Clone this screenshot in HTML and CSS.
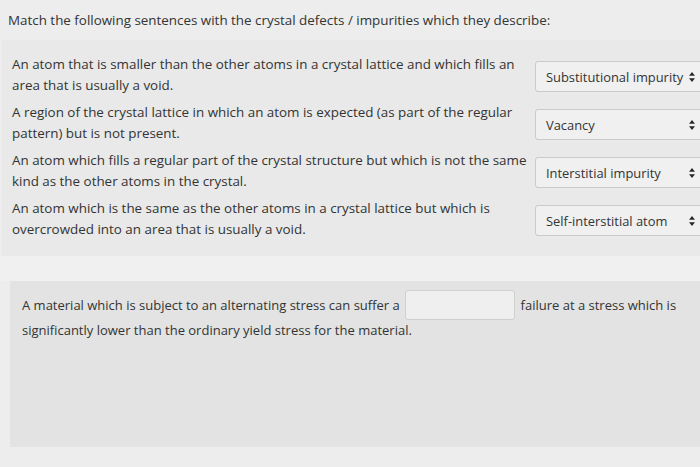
FILE: index.html
```html
<!DOCTYPE html>
<html>
<head>
<meta charset="utf-8">
<link rel="stylesheet" href="styles.css">
</head>
<body>
<div class="page">
  <p class="title">Match the following sentences with the crystal defects / impurities which they describe:</p>
  <div class="matching">
    <div class="row">
      <div class="stem">An atom that is smaller than the other atoms in a crystal lattice and which fills an area that is usually a void.</div>
      <div class="select"><span>Substitutional impurity</span><svg class="arrows" width="6" height="10" viewBox="0 0 6 10"><path d="M3 0L6 3.8H0Z M3 10L6 6.2H0Z" fill="#2a2a2a"/></svg></div>
    </div>
    <div class="row">
      <div class="stem">A region of the crystal lattice in which an atom is expected (as part of the regular pattern) but is not present.</div>
      <div class="select"><span>Vacancy</span><svg class="arrows" width="6" height="10" viewBox="0 0 6 10"><path d="M3 0L6 3.8H0Z M3 10L6 6.2H0Z" fill="#2a2a2a"/></svg></div>
    </div>
    <div class="row">
      <div class="stem">An atom which fills a regular part of the crystal structure but which is not the same kind as the other atoms in the crystal.</div>
      <div class="select"><span>Interstitial impurity</span><svg class="arrows" width="6" height="10" viewBox="0 0 6 10"><path d="M3 0L6 3.8H0Z M3 10L6 6.2H0Z" fill="#2a2a2a"/></svg></div>
    </div>
    <div class="row">
      <div class="stem">An atom which is the same as the other atoms in a crystal lattice but which is overcrowded into an area that is usually a void.</div>
      <div class="select"><span>Self-interstitial atom</span><svg class="arrows" width="6" height="10" viewBox="0 0 6 10"><path d="M3 0L6 3.8H0Z M3 10L6 6.2H0Z" fill="#2a2a2a"/></svg></div>
    </div>
  </div>
  <div class="gap"></div>
  <div class="cloze">
    <p class="cloze-text">A material which is subject to an alternating stress can suffer a <span class="blank"></span> failure at a stress which is significantly lower than the ordinary yield stress for the material.</p>
  </div>
</div>
</body>
</html>
```

FILE: styles.css
```css
html, body {
  margin: 0;
  padding: 0;
  background: #ecedec;
}
body {
  font-family: "Open Sans", "Noto Sans", sans-serif;
  color: #333434;
  font-size: 13px;
  width: 700px;
  height: 467px;
  overflow: hidden;
}
.page {
  display: flex;
  flex-direction: column;
}
.title {
  margin: 0;
  padding: 10px 8px 0 8px;
  height: 40px;
  box-sizing: border-box;
  line-height: 20px;
  font-size: 13.4px;
}
.matching {
  margin-left: 2px;
  background: #e8e9e8;
  padding: 12px 0 10px 0;
  height: 216px;
  box-sizing: border-box;
  display: flex;
  flex-direction: column;
  gap: 3px;
}
.row {
  display: flex;
  align-items: center;
  height: 45px;
}
.stem {
  flex: 1;
  padding-left: 10px;
  line-height: 21px;
  padding-right: 0;
  font-size: 13.4px;
}
.select {
  flex: none;
  width: 171px;
  height: 31px;
  box-sizing: border-box;
  margin-right: -6px;
  margin-top: 4px;
  border: 1px solid #c9cac9;
  border-radius: 3px;
  background: #eff0ef;
  display: flex;
  align-items: center;
  justify-content: space-between;
  padding: 0 10px 0 10px;
  font-size: 12.9px;
}
.arrows {
  display: block;
  flex: none;
}
.gap {
  height: 25px;
  background: #eff0ef;
}
.cloze {
  margin-left: 10px;
  height: 166px;
  background: #e2e3e2;
  padding: 12px 12px;
  box-sizing: border-box;
}
.cloze-text {
  margin: 0;
  line-height: 24px;
}
.blank {
  display: inline-block;
  width: 110px;
  height: 30px;
  box-sizing: border-box;
  border: 1px solid #cfd0cf;
  border-radius: 3px;
  background: #eeefee;
  vertical-align: middle;
  margin: -4px 2px;
  position: relative;
  top: -2px;
}
```
